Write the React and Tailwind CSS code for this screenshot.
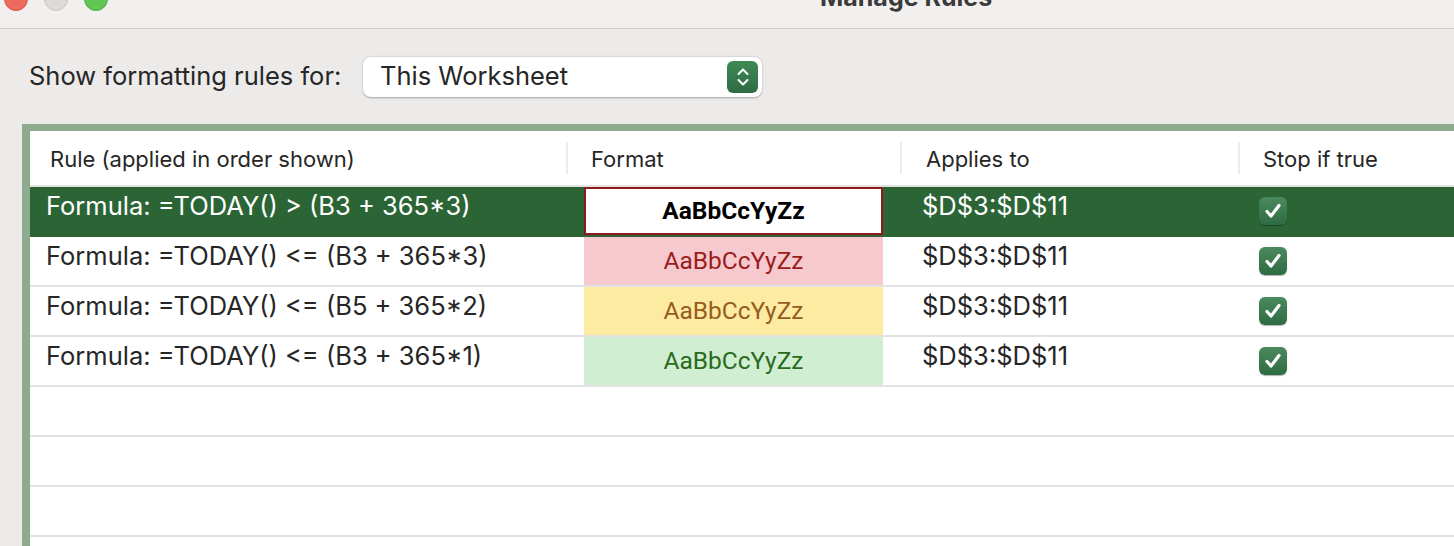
import React from 'react';

const rules = [
  { rule: 'Formula: =TODAY() > (B3 + 365*3)', fmt: 'bg-white border-2 border-[#8e1b1b] text-black font-bold', applies: '$D$3:$D$11', selected: true },
  { rule: 'Formula: =TODAY() <= (B3 + 365*3)', fmt: 'bg-[#f6c9ce] text-[#9b1c1c]', applies: '$D$3:$D$11' },
  { rule: 'Formula: =TODAY() <= (B5 + 365*2)', fmt: 'bg-[#fdeba2] text-[#955c1d]', applies: '$D$3:$D$11' },
  { rule: 'Formula: =TODAY() <= (B3 + 365*1)', fmt: 'bg-[#cfeed2] text-[#2a6a1e]', applies: '$D$3:$D$11' },
];

function Check() {
  return (
    <div className="w-[28px] h-[28px] rounded-[6px] bg-gradient-to-b from-[#4a8a5e] to-[#2f6b42] flex items-center justify-center shadow-[0_0.5px_1px_rgba(0,0,0,0.3)]">
      <svg width="22" height="22" viewBox="0 0 22 22" fill="none">
        <path d="M5 11.5 L9 16 L17 5.5" stroke="white" strokeWidth="3.2" strokeLinecap="round" strokeLinejoin="round" />
      </svg>
    </div>
  );
}

export default function App() {
  const font = { fontFamily: 'Inter, "Liberation Sans", sans-serif' };
  return (
    <div className="w-[1454px] h-[546px] overflow-hidden bg-[#ecebea] text-[#262626]" style={font}>
      {/* title bar */}
      <div className="h-[29px] bg-[#f1f0ef] border-b border-[#cdcccb] relative overflow-hidden">
        <div className="absolute left-[4px] top-[-13px] w-[24px] h-[24px] rounded-full bg-[#ed6a5e] border border-[#d35448]" />
        <div className="absolute left-[44px] top-[-13px] w-[24px] h-[24px] rounded-full bg-[#dcdbd9] border border-[#c5c4c2]" />
        <div className="absolute left-[84px] top-[-13px] w-[24px] h-[24px] rounded-full bg-[#61c554] border border-[#4fa943]" />
        <div className="absolute left-[820px] top-[-18px] text-[25px] leading-[30px] font-bold text-[#3a3a3a]">Manage Rules</div>
      </div>

      {/* filter */}
      <div className="flex items-center pl-[29px] h-[95px] pt-[20px] pb-[20px]">
        <span className="text-[25.5px] w-[334px]">Show formatting rules for:</span>
        <div className="w-[399px] h-[40px] bg-white rounded-[8px] shadow-[0_0.5px_2px_rgba(0,0,0,0.3)] flex items-center justify-between pl-[17px] pr-[4px]">
          <span className="text-[25.5px]">This Worksheet</span>
          <div className="w-[31px] h-[32px] rounded-[6px] bg-gradient-to-b from-[#3f8a57] to-[#2e6b43] flex items-center justify-center">
            <svg width="16" height="24" viewBox="0 0 16 24" fill="none">
              <path d="M3.5 9 L8 4.5 L12.5 9" stroke="white" strokeWidth="2" strokeLinecap="round" strokeLinejoin="round" />
              <path d="M3.5 15 L8 19.5 L12.5 15" stroke="white" strokeWidth="2" strokeLinecap="round" strokeLinejoin="round" />
            </svg>
          </div>
        </div>
      </div>

      {/* table */}
      <div className="ml-[22px] border-l-[8px] border-t-[7px] border-[#8fab8f] bg-white h-[430px]">
        <div className="grid grid-cols-[536px_334px_338px_1fr] h-[56px] items-center border-b-2 border-[#e3e3e3] text-[22px] text-[#262626]">
          <div className="pl-[20px] pt-[3px]">Rule (applied in order shown)</div>
          <div className="pl-[23px] border-l-2 border-[#ebebeb] h-[32px] flex items-center pt-[3px]">Format</div>
          <div className="pl-[24px] border-l-2 border-[#ebebeb] h-[32px] flex items-center pt-[3px]">Applies to</div>
          <div className="pl-[23px] border-l-2 border-[#ebebeb] h-[32px] flex items-center pt-[3px]">Stop if true</div>
        </div>
        {rules.map((r, i) => (
          <div key={i} className={`grid grid-cols-[536px_334px_338px_1fr] h-[50px] border-b-2 ${r.selected ? 'bg-[#2b6535] text-white border-[#2b6535]' : 'border-[#e3e3e3] text-[#262626]'}`}>
            <div className="pl-[16px] pt-[4px] text-[25.5px] leading-[30px]">{r.rule}</div>
            <div className="pl-[18px]">
              <div className={`w-[299px] h-full flex items-center justify-center text-[24.5px] ${r.fmt}`} style={{ fontFamily: 'Roboto, "Liberation Sans", sans-serif' }}>
                AaBbCcYyZz
              </div>
            </div>
            <div className="pl-[22px] pt-[4px] text-[25.5px] leading-[30px]">{r.applies}</div>
            <div className="pl-[21px] flex items-center"><Check /></div>
          </div>
        ))}
        {[0, 1, 2].map((i) => (
          <div key={i} className="h-[50px] border-b-2 border-[#e3e3e3]" />
        ))}
      </div>
    </div>
  );
}
